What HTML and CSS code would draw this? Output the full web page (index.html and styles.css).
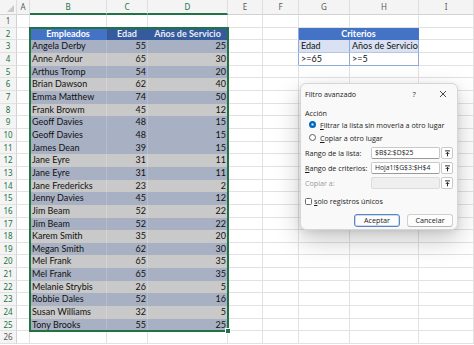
FILE: index.html
```html
<!DOCTYPE html>
<html lang="es">
<head>
<meta charset="utf-8">
<title>Filtro avanzado</title>
<link rel="stylesheet" href="styles.css">
</head>
<body>
<div class="sheet">
  <div class="hd corner"></div><div class="hd">A</div><div class="hd s">B</div><div class="hd s">C</div><div class="hd s">D</div><div class="hd">E</div><div class="hd">F</div><div class="hd">G</div><div class="hd">H</div><div class="hd">I</div>

  <div class="rh">1</div><div class="c"></div><div class="c"></div><div class="c"></div><div class="c"></div><div class="c"></div><div class="c"></div><div class="c"></div><div class="c"></div><div class="c"></div>

  <div class="rh s">2</div><div class="c"></div><div class="c th1">Empleados</div><div class="c th2">Edad</div><div class="c th2">Años de Servicio</div><div class="c"></div><div class="c bl"></div><div class="c crt">Criterios</div><div class="c"></div>

  <div class="rh s">3</div><div class="c"></div><div class="c b">Angela Derby</div><div class="c b n">55</div><div class="c b n">25</div><div class="c"></div><div class="c bl"></div><div class="c cr3">Edad</div><div class="c cr3 last">Años de Servicio</div><div class="c"></div>
  <div class="rh s">4</div><div class="c"></div><div class="c g">Anne Ardour</div><div class="c g n">65</div><div class="c g n">30</div><div class="c"></div><div class="c bl"></div><div class="c cr4">&gt;=65</div><div class="c cr4 last">&gt;=5</div><div class="c"></div>
  <div class="rh s">5</div><div class="c"></div><div class="c b">Arthus Tromp</div><div class="c b n">54</div><div class="c b n">20</div><div class="c"></div><div class="c"></div><div class="c"></div><div class="c"></div><div class="c"></div>
  <div class="rh s">6</div><div class="c"></div><div class="c g">Brian Dawson</div><div class="c g n">62</div><div class="c g n">40</div><div class="c"></div><div class="c"></div><div class="c"></div><div class="c"></div><div class="c"></div>
  <div class="rh s">7</div><div class="c"></div><div class="c b">Emma Matthew</div><div class="c b n">74</div><div class="c b n">50</div><div class="c"></div><div class="c"></div><div class="c"></div><div class="c"></div><div class="c"></div>
  <div class="rh s">8</div><div class="c"></div><div class="c g">Frank Browm</div><div class="c g n">45</div><div class="c g n">12</div><div class="c"></div><div class="c"></div><div class="c"></div><div class="c"></div><div class="c"></div>
  <div class="rh s">9</div><div class="c"></div><div class="c b">Geoff Davies</div><div class="c b n">48</div><div class="c b n">15</div><div class="c"></div><div class="c"></div><div class="c"></div><div class="c"></div><div class="c"></div>
  <div class="rh s">10</div><div class="c"></div><div class="c b">Geoff Davies</div><div class="c b n">48</div><div class="c b n">15</div><div class="c"></div><div class="c"></div><div class="c"></div><div class="c"></div><div class="c"></div>
  <div class="rh s">11</div><div class="c"></div><div class="c b">James Dean</div><div class="c b n">39</div><div class="c b n">15</div><div class="c"></div><div class="c"></div><div class="c"></div><div class="c"></div><div class="c"></div>
  <div class="rh s">12</div><div class="c"></div><div class="c g">Jane Eyre</div><div class="c g n">31</div><div class="c g n">11</div><div class="c"></div><div class="c"></div><div class="c"></div><div class="c"></div><div class="c"></div>
  <div class="rh s">13</div><div class="c"></div><div class="c b">Jane Eyre</div><div class="c b n">31</div><div class="c b n">11</div><div class="c"></div><div class="c"></div><div class="c"></div><div class="c"></div><div class="c"></div>
  <div class="rh s">14</div><div class="c"></div><div class="c g">Jane Fredericks</div><div class="c g n">23</div><div class="c g n">2</div><div class="c"></div><div class="c"></div><div class="c"></div><div class="c"></div><div class="c"></div>
  <div class="rh s">15</div><div class="c"></div><div class="c b">Jenny Davies</div><div class="c b n">45</div><div class="c b n">12</div><div class="c"></div><div class="c"></div><div class="c"></div><div class="c"></div><div class="c"></div>
  <div class="rh s">16</div><div class="c"></div><div class="c g">Jim Beam</div><div class="c g n">52</div><div class="c g n">22</div><div class="c"></div><div class="c"></div><div class="c"></div><div class="c"></div><div class="c"></div>
  <div class="rh s">17</div><div class="c"></div><div class="c b">Jim Beam</div><div class="c b n">52</div><div class="c b n">22</div><div class="c"></div><div class="c"></div><div class="c"></div><div class="c"></div><div class="c"></div>
  <div class="rh s">18</div><div class="c"></div><div class="c g">Karem Smith</div><div class="c g n">35</div><div class="c g n">20</div><div class="c"></div><div class="c"></div><div class="c"></div><div class="c"></div><div class="c"></div>
  <div class="rh s">19</div><div class="c"></div><div class="c b">Megan Smith</div><div class="c b n">62</div><div class="c b n">30</div><div class="c"></div><div class="c"></div><div class="c"></div><div class="c"></div><div class="c"></div>
  <div class="rh s">20</div><div class="c"></div><div class="c g">Mel Frank</div><div class="c g n">65</div><div class="c g n">35</div><div class="c"></div><div class="c"></div><div class="c"></div><div class="c"></div><div class="c"></div>
  <div class="rh s">21</div><div class="c"></div><div class="c b">Mel Frank</div><div class="c b n">65</div><div class="c b n">35</div><div class="c"></div><div class="c"></div><div class="c"></div><div class="c"></div><div class="c"></div>
  <div class="rh s">22</div><div class="c"></div><div class="c g">Melanie Strybis</div><div class="c g n">26</div><div class="c g n">5</div><div class="c"></div><div class="c"></div><div class="c"></div><div class="c"></div><div class="c"></div>
  <div class="rh s">23</div><div class="c"></div><div class="c b">Robbie Dales</div><div class="c b n">52</div><div class="c b n">16</div><div class="c"></div><div class="c"></div><div class="c"></div><div class="c"></div><div class="c"></div>
  <div class="rh s">24</div><div class="c"></div><div class="c g">Susan Williams</div><div class="c g n">32</div><div class="c g n">5</div><div class="c"></div><div class="c"></div><div class="c"></div><div class="c"></div><div class="c"></div>
  <div class="rh s">25</div><div class="c"></div><div class="c b">Tony Brooks</div><div class="c b n">55</div><div class="c b n">25</div><div class="c"></div><div class="c"></div><div class="c"></div><div class="c"></div><div class="c"></div>
  <div class="rh">26</div><div class="c"></div><div class="c"></div><div class="c"></div><div class="c"></div><div class="c"></div><div class="c"></div><div class="c"></div><div class="c"></div><div class="c"></div>

  <div class="sel"><span class="handle"></span></div>

  <div class="dlg">
    <div class="dlg-title">
      <span class="dlg-name">Filtro avanzado</span>
      <span class="dlg-q">?</span>
      <span class="dlg-x"><svg viewBox="0 0 8 8" width="8" height="8"><path d="M1 1L7 7M7 1L1 7" stroke="#333" stroke-width="0.9" fill="none"/></svg></span>
    </div>
    <div class="dlg-body">
      <div class="grp">Acción</div>
      <div class="radio on"><span class="rb"></span><span><u>F</u>iltrar la lista sin moverla a otro lugar</span></div>
      <div class="radio"><span class="rb"></span><span><u>C</u>opiar a otro lugar</span></div>
      <div class="field first"><span class="lbl">Ran<u>g</u>o de la lista:</span><span class="inp"><span class="val">$B$2:$D$25</span><span class="pick"><svg viewBox="0 0 8 8" width="7" height="7"><path d="M1.2 1h5.6M4 7.2V2.6M2 4.6L4 2.6 6 4.6" stroke="#222" stroke-width="1.1" fill="none"/></svg></span></span></div>
      <div class="field"><span class="lbl"><u>R</u>ango de criterios:</span><span class="inp"><span class="val">Hoja1!$G$3:$H$4</span><span class="pick"><svg viewBox="0 0 8 8" width="7" height="7"><path d="M1.2 1h5.6M4 7.2V2.6M2 4.6L4 2.6 6 4.6" stroke="#222" stroke-width="1.1" fill="none"/></svg></span></span></div>
      <div class="field dis"><span class="lbl">Copiar a:</span><span class="inp"><span class="val"></span><span class="pick"><svg viewBox="0 0 8 8" width="7" height="7"><path d="M1.2 1h5.6M4 7.2V2.6M2 4.6L4 2.6 6 4.6" stroke="#222" stroke-width="1.1" fill="none"/></svg></span></span></div>
      <div class="chk"><span class="cb"></span><span><u>s</u>olo registros únicos</span></div>
      <div class="btns"><span class="btn primary">Aceptar</span><span class="btn">Cancelar</span></div>
    </div>
  </div>
</div>
</body>
</html>
```
FILE: styles.css
```css
* { box-sizing: border-box; }
html, body { margin: 0; padding: 0; height: 100%; overflow: hidden; background: #fff; }
body { font-family: Lato, "Liberation Sans", sans-serif; }

.sheet {
  position: relative;
  display: grid;
  width: 474px;
  grid-template-columns: 17px 13px 77px 41px 80px 35px 36px 51px 69px 1fr;
  grid-template-rows: 15px repeat(26, 12.667px);
}

.hd {
  background: #f4f4f4;
  border-right: 1px solid #dedede;
  border-bottom: 1px solid #d2d2d2;
  color: #5a5a5a;
  font-family: "Noto Sans", "Liberation Sans", sans-serif;
  font-size: 8px;
  line-height: 14px;
  text-align: center;
}
.hd.s { color: #217346; border-bottom: 2px solid #217346; }
.corner { position: relative; }
.corner::after {
  content: "";
  position: absolute;
  right: 2px; bottom: 2px;
  border-left: 7px solid transparent;
  border-bottom: 7px solid #c9c9c9;
}

.rh {
  background: #f4f4f4;
  border-right: 1px solid #d2d2d2;
  border-bottom: 1px solid #e2e2e2;
  color: #5a5a5a;
  font-family: "Noto Sans", "Liberation Sans", sans-serif;
  font-size: 8px;
  line-height: 12px;
  text-align: center;
}
.rh.s { color: #217346; }

.c {
  border-right: 1px solid #e2e2e2;
  border-bottom: 1px solid #e2e2e2;
  font-size: 9px;
  line-height: 12px;
  padding: 0 2px;
  white-space: nowrap;
  overflow: hidden;
  color: #111;
}
.c.n { text-align: right; padding-right: 1px; }
.c.b { background: #a8b0c3; border-right-color: #b6bdcc; border-bottom-color: #a8b0c3; }
.c.g { background: #c9c9c9; border-right-color: #d4d4d4; border-bottom-color: #c9c9c9; }
.th1 { background: #4472c4; color: #fff; font-weight: 700; text-align: center; border-right-color: #4472c4; border-bottom-color: #4472c4; }
.th2 { background: #365b9d; color: #e9edf5; font-weight: 700; text-align: center; border-right-color: #365b9d; border-bottom-color: #365b9d; }

.c.bl { border-right-color: #8eaadb; }
.crt {
  grid-column: span 2;
  background: #4472c4;
  color: #fff;
  font-weight: 700;
  text-align: center;
  border-right-color: #4472c4;
  border-bottom-color: #4472c4;
}
.cr3 { background: #d9e1f2; border-right-color: #8eaadb; border-bottom-color: #b4c6e7; }
.cr4 { background: #fff; border-right-color: #8eaadb; border-bottom-color: #8eaadb; }

.sel {
  position: absolute;
  grid-row: 3 / 27;
  grid-column: 3 / 6;
  inset: -1px -1px -1px -1px;
  border: 2px solid #217346;
  pointer-events: none;
}
.handle {
  position: absolute;
  right: -3px; bottom: -3px;
  width: 4px; height: 4px;
  background: #217346;
  outline: 1px solid #fff;
}

.dlg {
  position: absolute;
  left: 300px;
  top: 83px;
  width: 158px;
  height: 147px;
  background: #f9f9f9;
  border: 1px solid #d6d6d6;
  border-radius: 6px;
  box-shadow: 0 10px 26px rgba(0,0,0,0.22), 0 2px 6px rgba(0,0,0,0.08);
  font-family: "Open Sans", "Noto Sans", sans-serif;
  font-size: 7.2px;
  color: #1b1b1b;
  display: flex;
  flex-direction: column;
}
.dlg-title {
  height: 20px;
  display: flex;
  align-items: center;
  padding: 0 0 0 4px;
}
.dlg-name { flex: 1; }
.dlg-q { width: 10px; text-align: center; margin-right: 18px; font-size: 7.5px; }
.dlg-x { width: 12px; display: flex; justify-content: center; margin-right: 8px; }
.dlg-body { padding: 4px 4px 0 4px; display: flex; flex-direction: column; }
.grp { height: 10px; line-height: 10px; }
.radio { height: 13px; display: flex; align-items: center; padding-left: 4px; gap: 4px; }
.rb {
  width: 7px; height: 7px; border-radius: 50%;
  border: 1px solid #5f5f5f; background: #fff; flex: none;
}
.radio.on .rb { border: 2px solid #0067c0; background: #fff; box-shadow: inset 0 0 0 0.5px #0067c0; }
.field { height: 12px; display: flex; align-items: center; margin-top: 3px; }
.field.first { margin-top: 3px; }
.lbl { width: 66px; flex: none; }
.inp { flex: 1; display: flex; gap: 1px; height: 12px; }
.val {
  flex: 1; background: #fff; border: 1px solid #c9c9c9; border-bottom-color: #9a9a9a;
  border-radius: 2px; padding: 0 3px; line-height: 10px; font-size: 6.8px;
}
.pick {
  width: 12px; background: #fff; border: 1px solid #c9c9c9; border-radius: 2px;
  display: flex; align-items: center; justify-content: center;
}
.field.dis .lbl { color: #9b9b9b; }
.field.dis .val { background: #efefef; border-color: #dcdcdc; }
.chk { height: 12px; margin-top: 6px; display: flex; align-items: center; gap: 2px; }
.cb { width: 7px; height: 7px; border: 1px solid #6a6a6a; border-radius: 1.5px; background: #fff; }
.btns { margin-top: 7px; display: flex; justify-content: flex-end; gap: 7px; }
.btn {
  width: 46px; height: 13px; line-height: 11px; text-align: center;
  background: #fdfdfd; border: 1px solid #d0d0d0; border-bottom-color: #b5b5b5; border-radius: 3px;
}
.btn.primary { border: 1px solid #5b86c6; box-shadow: inset 0 0 0 0.5px #9db7dd; }
u { text-decoration-thickness: 0.6px; text-underline-offset: 1px; }
```
